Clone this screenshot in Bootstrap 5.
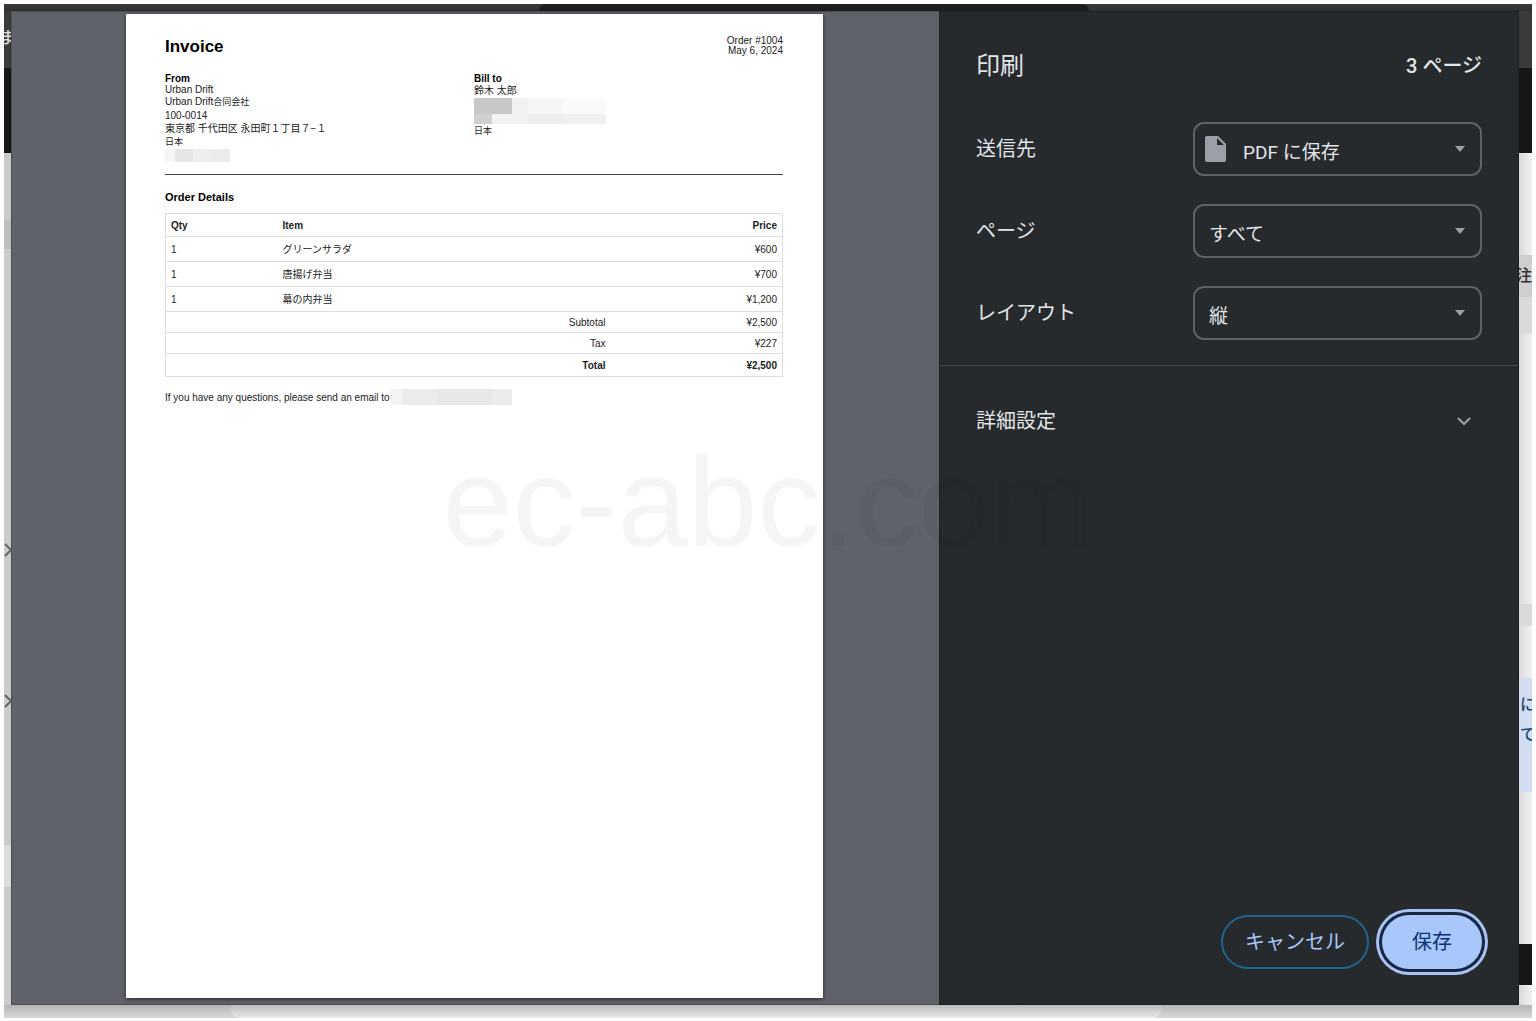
<!DOCTYPE html>
<html lang="ja">
<head>
<meta charset="utf-8">
<meta name="viewport" content="width=device-width, initial-scale=1">
<title>印刷</title>
<link href="https://cdn.jsdelivr.net/npm/bootstrap@5.3.0/dist/css/bootstrap.min.css" rel="stylesheet">
<style>
  body { background: #fff; font-family: "Liberation Sans", "Noto Sans CJK JP", sans-serif; color: #111; }
  .screen { min-height: 100vh; padding: 4px 4px 3px; }

  /* slivers of the admin page behind the dialog */
  .edge-top { height: 7px; background: linear-gradient(#3b3b3c, #303031); }
  .edge-tab { width: 36%; margin-left: 35%; background: #1d1d1f; border-radius: 8px 8px 0 0; }
  .edge-side { overflow: hidden; }
  .edge-left { width: 7px; color: #555; }
  .edge-right { width: 13px; color: #333; }
  .edge-side > div { flex: none; overflow: hidden; white-space: nowrap; }
  .edge-left > div { background: #cbcbcb; }
  .edge-right > div { background: linear-gradient(90deg, #dadada, #f1f1f1); }
  .edge-left > .tone-bar, .edge-right > .tone-bar { background: #3a3a3b; color: #ddd; }
  .edge-left > .tone-black, .edge-right > .tone-black { background: #161617; }
  .edge-left > .tone-dim { background: #bdbdbd; }
  .edge-left > .tone-lit { background: #dcdcdc; }
  .edge-right > .tone-dim { background: #cfcfcf; }
  .edge-right > .tone-soft { background: #dadada; }
  .edge-right > .tone-blue { background: #d3ddf2; color: #1f4a77; padding-left: 1px; }
  .edge-glyph { font-size: 16px; line-height: 30px; font-weight: 500; }
  .edge-bottom { height: 13px; background: linear-gradient(#b4b4b4, #d9d9d9); }
  .edge-card { width: 935px; max-width: 61%; margin-left: 226px; background: linear-gradient(#bababa, #ebebeb); border-radius: 0 0 10px 10px; }

  .preview { background: #5f6269; border: 1px solid #4b4d53; border-right: 0; padding: 2px 12px 6px 10px; }
  .paper { width: 697px; max-width: 100%; background: #fff; padding: 22px 40px 22px 39px; box-shadow: 0 1px 4px rgba(0,0,0,.6); font-size: 10px; line-height: 13px; color: #222; }
  .paper h1 { font-size: 17px; line-height: 22px; font-weight: 700; color: #000; }
  .paper h2 { font-size: 10px; line-height: 11px; font-weight: 700; color: #000; }
  .paper h3 { font-size: 11px; line-height: 14px; font-weight: 700; color: #000; margin: 15px 0 9px; }
  .order-meta { line-height: 10px; }
  .parties { margin-top: 15px; min-height: 102px; border-bottom: 1px solid #444; }
  .tight { line-height: 11px; }
  .roomy { line-height: 14px; }
  .jp { font-size: 9px; }
  .mask-a { width: 65px; height: 13px; background: linear-gradient(90deg, #f5f5f5 10px, #e6e6e6 10px 28px, #eee 28px 46px, #ebebeb 46px); }
  .mask-b { width: 132px; height: 16px; background: linear-gradient(90deg, #c8c8c8 38px, #f1f2f2 38px 54px, #f7f5f5 54px 88px, #fbf9f9 88px); }
  .mask-c { width: 132px; height: 10px; background: linear-gradient(90deg, #d0d0d0 18px, #f2f2f2 18px 54px, #ededed 54px 88px, #f0f0f0 88px); }
  .mask-d { width: 122px; height: 16px; background: linear-gradient(90deg, #f4f4f4 12px, #ebebeb 12px 48px, #e7e7e7 48px 102px, #ececec 102px); }

  .order-table { border: 1px solid #dedede; font-size: 10px; line-height: 13px; color: #222; margin: 0 0 12px; table-layout: fixed; width: 100%; }
  .order-table tr { height: 21px; border-top: 1px solid #dedede; }
  .order-table .line-row { height: 25px; }
  .order-table .head-row { height: 23px; }
  .order-table th, .order-table td { padding: 0 5px; vertical-align: middle; }
  .order-table .col-qty { width: 112px; }
  .order-table .col-sum { width: 172px; }

  .panel { width: 580px; background: #262a2d; border: 1px solid #1e2124; color: #e3e4e6; font-family: Roboto, "Noto Sans CJK JP", sans-serif; font-size: 20px; line-height: 30px; }
  .panel-head { padding: 36px 36px 38px; }
  .panel-head h2 { font-size: 24px; line-height: 36px; font-weight: 400; }
  .page-count { font-weight: 500; }
  .options { padding: 0 36px 25px; gap: 28px; border-bottom: 1px solid #45484c; }
  .picker { width: 289px; }
  .picker .form-select { height: 54px; padding: 7px 40px 0 14px; border: 2px solid #5f6266; border-radius: 11px; color: #e3e4e6; font-size: 19px; line-height: 28px;
    background: transparent url("data:image/svg+xml,%3Csvg xmlns='http://www.w3.org/2000/svg' viewBox='0 0 10 6'%3E%3Cpath fill='%239aa0a6' d='M0 0h10L5 6z'/%3E%3C/svg%3E") no-repeat right 15px center / 10px 6px; }
  .picker .form-select option { color: #111; }
  .picker .with-icon { padding-left: 48px; }
  .picker svg { position: absolute; left: 12px; top: 14px; }
  .more { padding: 40px 47px 0 36px; color: #e3e4e6; font-size: 20px; line-height: 30px; }
  .actions { padding: 0 36px 35px; gap: 13px; }
  .actions .btn { height: 54px; border-radius: 27px; font-size: 20px; line-height: 30px; }
  .btn-cancel, .btn-cancel:hover { width: 148px; border: 2px solid #1f668d; color: #a9c5fa; }
  .btn-save, .btn-save:hover { width: 100px; border: 0; background: #a8c7fa; color: #0b3272; box-shadow: 0 0 0 3px #182744, 0 0 0 6px #a9c3f3; }

  .watermark { position: absolute; inset: 0; padding-bottom: 15px; font-size: 126px; line-height: 1; color: rgba(0,0,0,.04); pointer-events: none; }
</style>
<script src="https://cdn.jsdelivr.net/npm/bootstrap@5.3.0/dist/js/bootstrap.bundle.min.js"></script>
</head>
<body>
<div class="screen d-flex flex-column position-relative">
  <div class="edge-top d-flex"><div class="edge-tab"></div></div>

  <div class="d-flex flex-grow-1">
    <div class="edge-side edge-left d-flex flex-column">
      <div class="tone-bar edge-glyph d-flex justify-content-center" style="height:57px"><span class="mt-2 pt-1">ま</span></div>
      <div class="tone-black" style="height:85px"></div>
      <div style="height:67px"></div>
      <div class="tone-dim" style="height:29px"></div>
      <div style="height:286px"></div>
      <div style="height:151px"><svg class="d-block" width="8" height="30" viewBox="0 0 8 30" fill="none" stroke="#666" stroke-width="2"><path d="M1 9l6 6-6 6"/></svg></div>
      <div style="height:159px"><svg class="d-block" width="8" height="30" viewBox="0 0 8 30" fill="none" stroke="#666" stroke-width="2"><path d="M1 9l6 6-6 6"/></svg></div>
      <div class="tone-lit" style="height:42px"></div>
      <div class="flex-fill"></div>
    </div>

    <main class="d-flex flex-grow-1">
      <section class="preview flex-grow-1 d-flex justify-content-center" aria-label="プレビュー">
        <article class="paper">
          <header class="d-flex justify-content-between">
            <h1 class="m-0">Invoice</h1>
            <div class="order-meta text-end">Order #1004<br>May 6, 2024</div>
          </header>

          <div class="parties row g-0">
            <div class="col-6">
              <h2 class="m-0">From</h2>
              <div class="tight">Urban Drift</div>
              <div>Urban Drift<span class="jp">合同会社</span></div>
              <div>100-0014</div>
              <div>東京都 千代田区 永田町１丁目７−１</div>
              <div class="jp roomy">日本</div>
              <div class="mask-a"></div>
            </div>
            <div class="col-6">
              <h2 class="m-0">Bill to</h2>
              <div class="roomy">鈴木 太郎</div>
              <div class="mask-b"></div>
              <div class="mask-c"></div>
              <div class="jp roomy">日本</div>
            </div>
          </div>

          <h3>Order Details</h3>
          <table class="order-table">
            <colgroup><col class="col-qty"><col><col class="col-sum"></colgroup>
            <thead>
              <tr class="head-row"><th>Qty</th><th>Item</th><th class="text-end">Price</th></tr>
            </thead>
            <tbody>
              <tr class="line-row"><td>1</td><td>グリーンサラダ</td><td class="text-end">¥600</td></tr>
              <tr class="line-row"><td>1</td><td>唐揚げ弁当</td><td class="text-end">¥700</td></tr>
              <tr class="line-row"><td>1</td><td>幕の内弁当</td><td class="text-end">¥1,200</td></tr>
            </tbody>
            <tfoot>
              <tr><td class="text-end" colspan="2">Subtotal</td><td class="text-end">¥2,500</td></tr>
              <tr><td class="text-end" colspan="2">Tax</td><td class="text-end">¥227</td></tr>
              <tr class="head-row"><th class="text-end" colspan="2">Total</th><th class="text-end">¥2,500</th></tr>
            </tfoot>
          </table>
          <div class="d-flex align-items-center">
            <span>If you have any questions, please send an email to</span><span class="mask-d"></span>
          </div>
        </article>
      </section>

      <form class="panel flex-shrink-0 d-flex flex-column">
        <div class="panel-head d-flex justify-content-between align-items-center">
          <h2 class="m-0">印刷</h2>
          <span class="page-count">3 ページ</span>
        </div>
        <div class="options d-flex flex-column">
          <div class="d-flex justify-content-between align-items-center">
            <label for="dest">送信先</label>
            <div class="picker position-relative">
              <select id="dest" class="form-select with-icon"><option>PDF に保存</option></select>
              <svg width="21" height="26" viewBox="0 0 21 26" aria-hidden="true"><path fill="#9aa0a6" fill-rule="evenodd" d="M2 0h11l8 8v16a2 2 0 0 1-2 2H2a2 2 0 0 1-2-2V2a2 2 0 0 1 2-2zm10 2v7h7z"/></svg>
            </div>
          </div>
          <div class="d-flex justify-content-between align-items-center">
            <label for="pages">ページ</label>
            <div class="picker"><select id="pages" class="form-select"><option>すべて</option></select></div>
          </div>
          <div class="d-flex justify-content-between align-items-center">
            <label for="layout">レイアウト</label>
            <div class="picker"><select id="layout" class="form-select"><option>縦</option></select></div>
          </div>
        </div>
        <button type="button" class="more bg-transparent border-0 d-flex justify-content-between align-items-center">
          <span>詳細設定</span>
          <svg width="14" height="9" viewBox="0 0 14 9" fill="none" stroke="#9aa0a6" stroke-width="2" aria-hidden="true"><path d="M1 1l6 6 6-6"/></svg>
        </button>
        <div class="actions d-flex justify-content-end mt-auto">
          <button type="button" class="btn btn-cancel p-0">キャンセル</button>
          <button type="submit" class="btn btn-save p-0">保存</button>
        </div>
      </form>
    </main>

    <div class="edge-side edge-right d-flex flex-column">
      <div class="tone-bar" style="height:57px"></div>
      <div class="tone-black" style="height:85px"></div>
      <div style="height:102px"></div>
      <div class="tone-dim edge-glyph d-flex justify-content-end align-items-center" style="height:42px">注</div>
      <div class="tone-soft" style="height:37px"></div>
      <div style="height:270px"></div>
      <div class="tone-soft" style="height:22px"></div>
      <div style="height:52px"></div>
      <div class="tone-blue edge-glyph" style="height:114px"><div class="mt-2 pt-1">に</div><div>て</div></div>
      <div style="height:152px"></div>
      <div class="tone-black" style="height:41px"></div>
      <div class="flex-fill"></div>
    </div>
  </div>

  <div class="edge-bottom d-flex"><div class="edge-card"></div></div>
  <div class="watermark d-flex justify-content-center align-items-center" aria-hidden="true">ec-abc.com</div>
</div>
</body>
</html>
